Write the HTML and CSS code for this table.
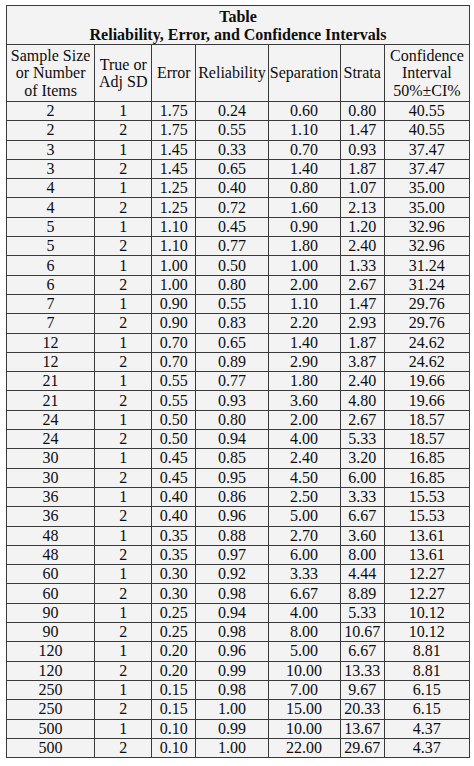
FILE: index.html
```html
<!DOCTYPE html>
<html>
<head>
<meta charset="utf-8">
<link rel="stylesheet" href="styles.css">
</head>
<body>
<table class="data">
<colgroup>
<col class="c1"><col class="c2"><col class="c3"><col class="c4"><col class="c5"><col class="c6"><col class="c7">
</colgroup>
<thead>
<tr class="title"><th colspan="7">Table<br>Reliability, Error, and Confidence Intervals</th></tr>
<tr class="head">
<th>Sample Size<br>or Number<br>of Items</th>
<th>True or<br>Adj SD</th>
<th>Error</th>
<th>Reliability</th>
<th>Separation</th>
<th>Strata</th>
<th>Confidence<br>Interval<br>50%±CI%</th>
</tr>
</thead>
<tbody>
<tr><td>2</td><td>1</td><td>1.75</td><td>0.24</td><td>0.60</td><td>0.80</td><td>40.55</td></tr>
<tr><td>2</td><td>2</td><td>1.75</td><td>0.55</td><td>1.10</td><td>1.47</td><td>40.55</td></tr>
<tr><td>3</td><td>1</td><td>1.45</td><td>0.33</td><td>0.70</td><td>0.93</td><td>37.47</td></tr>
<tr><td>3</td><td>2</td><td>1.45</td><td>0.65</td><td>1.40</td><td>1.87</td><td>37.47</td></tr>
<tr><td>4</td><td>1</td><td>1.25</td><td>0.40</td><td>0.80</td><td>1.07</td><td>35.00</td></tr>
<tr><td>4</td><td>2</td><td>1.25</td><td>0.72</td><td>1.60</td><td>2.13</td><td>35.00</td></tr>
<tr><td>5</td><td>1</td><td>1.10</td><td>0.45</td><td>0.90</td><td>1.20</td><td>32.96</td></tr>
<tr><td>5</td><td>2</td><td>1.10</td><td>0.77</td><td>1.80</td><td>2.40</td><td>32.96</td></tr>
<tr><td>6</td><td>1</td><td>1.00</td><td>0.50</td><td>1.00</td><td>1.33</td><td>31.24</td></tr>
<tr><td>6</td><td>2</td><td>1.00</td><td>0.80</td><td>2.00</td><td>2.67</td><td>31.24</td></tr>
<tr><td>7</td><td>1</td><td>0.90</td><td>0.55</td><td>1.10</td><td>1.47</td><td>29.76</td></tr>
<tr><td>7</td><td>2</td><td>0.90</td><td>0.83</td><td>2.20</td><td>2.93</td><td>29.76</td></tr>
<tr><td>12</td><td>1</td><td>0.70</td><td>0.65</td><td>1.40</td><td>1.87</td><td>24.62</td></tr>
<tr><td>12</td><td>2</td><td>0.70</td><td>0.89</td><td>2.90</td><td>3.87</td><td>24.62</td></tr>
<tr><td>21</td><td>1</td><td>0.55</td><td>0.77</td><td>1.80</td><td>2.40</td><td>19.66</td></tr>
<tr><td>21</td><td>2</td><td>0.55</td><td>0.93</td><td>3.60</td><td>4.80</td><td>19.66</td></tr>
<tr><td>24</td><td>1</td><td>0.50</td><td>0.80</td><td>2.00</td><td>2.67</td><td>18.57</td></tr>
<tr><td>24</td><td>2</td><td>0.50</td><td>0.94</td><td>4.00</td><td>5.33</td><td>18.57</td></tr>
<tr><td>30</td><td>1</td><td>0.45</td><td>0.85</td><td>2.40</td><td>3.20</td><td>16.85</td></tr>
<tr><td>30</td><td>2</td><td>0.45</td><td>0.95</td><td>4.50</td><td>6.00</td><td>16.85</td></tr>
<tr><td>36</td><td>1</td><td>0.40</td><td>0.86</td><td>2.50</td><td>3.33</td><td>15.53</td></tr>
<tr><td>36</td><td>2</td><td>0.40</td><td>0.96</td><td>5.00</td><td>6.67</td><td>15.53</td></tr>
<tr><td>48</td><td>1</td><td>0.35</td><td>0.88</td><td>2.70</td><td>3.60</td><td>13.61</td></tr>
<tr><td>48</td><td>2</td><td>0.35</td><td>0.97</td><td>6.00</td><td>8.00</td><td>13.61</td></tr>
<tr><td>60</td><td>1</td><td>0.30</td><td>0.92</td><td>3.33</td><td>4.44</td><td>12.27</td></tr>
<tr><td>60</td><td>2</td><td>0.30</td><td>0.98</td><td>6.67</td><td>8.89</td><td>12.27</td></tr>
<tr><td>90</td><td>1</td><td>0.25</td><td>0.94</td><td>4.00</td><td>5.33</td><td>10.12</td></tr>
<tr><td>90</td><td>2</td><td>0.25</td><td>0.98</td><td>8.00</td><td>10.67</td><td>10.12</td></tr>
<tr><td>120</td><td>1</td><td>0.20</td><td>0.96</td><td>5.00</td><td>6.67</td><td>8.81</td></tr>
<tr><td>120</td><td>2</td><td>0.20</td><td>0.99</td><td>10.00</td><td>13.33</td><td>8.81</td></tr>
<tr><td>250</td><td>1</td><td>0.15</td><td>0.98</td><td>7.00</td><td>9.67</td><td>6.15</td></tr>
<tr><td>250</td><td>2</td><td>0.15</td><td>1.00</td><td>15.00</td><td>20.33</td><td>6.15</td></tr>
<tr><td>500</td><td>1</td><td>0.10</td><td>0.99</td><td>10.00</td><td>13.67</td><td>4.37</td></tr>
<tr><td>500</td><td>2</td><td>0.10</td><td>1.00</td><td>22.00</td><td>29.67</td><td>4.37</td></tr>
</tbody>
</table>
</body>
</html>
```
FILE: styles.css
```css
html, body {
  margin: 0;
  padding: 0;
  background: #ffffff;
}
body {
  padding: 5px 0 0 6px;
  font-family: "Liberation Serif", "Times New Roman", serif;
  font-size: 16px;
  color: #0d0d0d;
}
.data {
  border-collapse: collapse;
  table-layout: fixed;
  width: 464px;
  background: #f3f3f3;
  border: 1px solid #3a3a3a;
}
.c1 { width: 88px; }
.c2 { width: 57px; }
.c3 { width: 44px; }
.c4 { width: 72px; }
.c5 { width: 72px; }
.c6 { width: 44px; }
.c7 { width: 85px; }
.data th,
.data td {
  border: 1px solid #3a3a3a;
  padding: 0;
  text-align: center;
  vertical-align: middle;
  white-space: nowrap;
}
.title th {
  font-weight: bold;
  line-height: 18px;
  height: 36px;
  padding-top: 2px;
}
.head th {
  font-weight: normal;
  line-height: 17.5px;
  height: 56px;
}
.data td {
  height: 18.3px;
  line-height: 18px;
}
```
